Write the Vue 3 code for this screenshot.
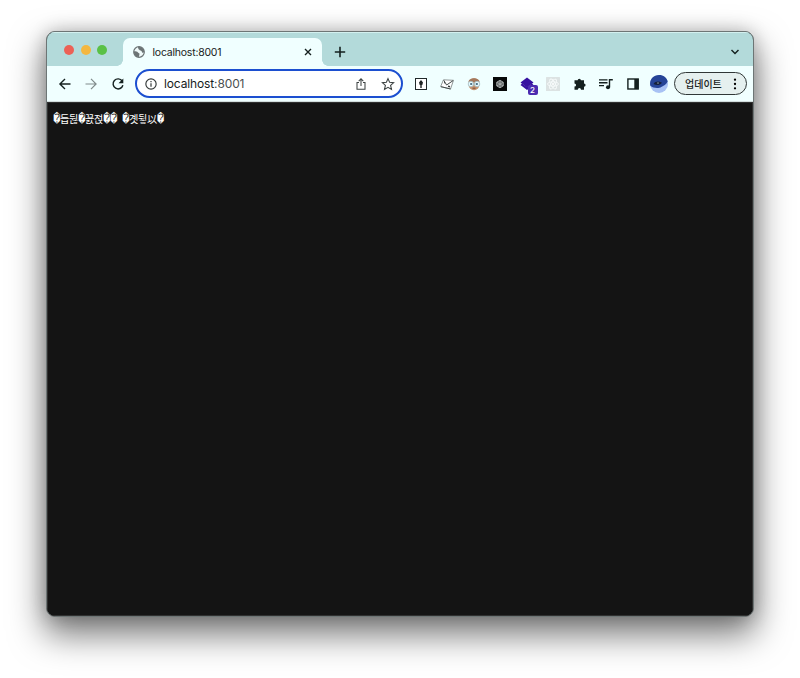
<script setup>
const body = [
  { t: '�', bad: true }, { t: '듭뒪' }, { t: '�', bad: true }, { t: '꾨젅' },
  { t: '��', bad: true }, { t: ' ', gap: true }, { t: '�', bad: true }, { t: '곗뒿以' }, { t: '�', bad: true }
]
const lights = ['#ec6156', '#f4b73f', '#5ac146']
</script>

<template>
  <main class="desktop">
    <section class="window">
      <header class="tabs">
        <div class="lights"><i v-for="c in lights" :key="c" :style="{ background: c }"></i></div>
        <div class="tab">
          <svg class="globe" width="12" height="12" viewBox="0 0 12 12"><circle cx="6" cy="6" r="5.3" fill="#f0fafa" stroke="#6c7475" stroke-width="1.2"/><path d="M1 5.3c2 0 3.2.2 4 1.2.7.8 1.6.4 1.5 1.5L5.9 11C2.7 11.2.6 8.4 1 5.3M5.2.9c-.7 1.4.4 1.2.4 2.2 0 .8 1.4.5 1.3 1.5 0 .8 1.2.2 1.9.9.7.6.2 1.4 1 1.5l1.4-.9C11.2 3.300 8.600.5 5.200.9" fill="#6c7475"/></svg>
          <span>localhost:8001</span>
          <svg class="close" width="8" height="8" viewBox="0 0 8 8"><path d="M1 1l6 6M7 1L1 7" stroke="#14201f" stroke-width="1.35"/></svg>
        </div>
        <svg class="plus" width="12" height="12" viewBox="0 0 12 12"><path d="M6 .8v10.400M.8 6h10.400" stroke="#14201f" stroke-width="1.600"/></svg>
        <svg class="chevron" width="10" height="8" viewBox="0 0 10 8"><path d="M1.500 2L5 5.600 8.500 2" fill="none" stroke="#14201f" stroke-width="1.400"/></svg>
      </header>

      <nav class="toolbar">
        <div class="history">
          <svg width="14" height="14" viewBox="0 0 14 14"><path d="M12.500 7H2M7 1.900L1.900 7 7 12.100" fill="none" stroke="#14201f" stroke-width="1.350"/></svg>
          <svg width="14" height="14" viewBox="0 0 14 14"><path d="M1.500 7H12M7 1.900L12.100 7 7 12.100" fill="none" stroke="#808b8b" stroke-width="1.200"/></svg>
          <svg width="14" height="14" viewBox="0 0 14 14"><path d="M11.200 4A5 5 0 1 0 11.900 8.300" fill="none" stroke="#14201f" stroke-width="1.450"/><path d="M12.300 1.400v4.800H7.500z" fill="#14201f"/></svg>
        </div>
        <div class="address">
          <svg width="12" height="12" viewBox="0 0 12 12"><circle cx="6" cy="6" r="5.150" fill="none" stroke="#333838" stroke-width="1.150"/><path d="M6 5.300v3.400M6 3v1.200" stroke="#333838" stroke-width="1.200"/></svg>
          <span class="url">localhost<em>:8001</em></span>
          <svg class="share" width="12" height="14" viewBox="0 0 12 14"><path d="M4 5.500H2v6.800h8V5.500H8M6 9V2M3.700 4.100L6 1.800l2.300 2.300" fill="none" stroke="#3e4444" stroke-width="1.050"/></svg>
          <svg width="14" height="14" viewBox="0 0 14 14"><path d="M7 1.600l1.600 3.700 4 .4-3 2.700.9 4L7 10.300l-3.500 2.100.9-4-3-2.700 4-.4z" fill="none" stroke="#3e4444" stroke-width="1.100"/></svg>
        </div>
        <div class="extensions">
          <svg width="14" height="14" viewBox="0 0 14 14"><rect x="1.500" y="1.500" width="11" height="11" fill="#fff" stroke="#20292a"/><path d="M7 3l2 2.500-.7 2.500H5.700L5 5.500zM6.300 8h1.400v3H6.300z" fill="#202525"/></svg>
          <svg width="14" height="14" viewBox="0 0 14 14"><path d="M3.500 2.800l10 .5L10.500 12 .6 9.600z" fill="#fff" stroke="#777e7e" stroke-width=".8"/><path d="M3.800 3.300L6.600 8l6.500-4.400M1 9.700L10.600 12" fill="none" stroke="#454d4d" stroke-width="1"/><path d="M4 5.500l.8.200M8 9.200l2 .5" stroke="#343a3a" stroke-width="1.400"/></svg>
          <svg width="14" height="14" viewBox="0 0 14 14"><ellipse cx="7" cy="7.200" rx="5.500" ry="6" fill="#c6936f"/><path d="M1.400 5.300C1.700 0 12.300 0 12.600 5.300z" fill="#a4785c"/><circle cx="3.900" cy="7" r="2.700" fill="#e6faff" stroke="#9bb8bf" stroke-width=".7"/><circle cx="10.100" cy="7" r="2.700" fill="#e6faff" stroke="#9bb8bf" stroke-width=".7"/><path d="M3.200 7h2M8.800 7h2" stroke="#244d64" stroke-width="1.500"/><path d="M5.500 11.200h3" stroke="#754d3c"/></svg>
          <svg width="14" height="14" viewBox="0 0 14 14"><rect width="14" height="14" fill="#070909"/><path d="M7 3.300l3.300 1.900v3.700L7 10.800 3.700 8.900V5.200z" fill="#5d6262" stroke="#b9bebe" stroke-width=".8"/><path d="M4 5.400l6 3.400M10 5.400L4 8.800M7 3.500v7" stroke="#c6caca" stroke-width=".6"/></svg>
          <span class="layers">
            <svg width="14" height="14" viewBox="0 0 14 14"><path d="M7 .5l6.500 5L7 10.500.5 5.500z" fill="#3610a0"/><path d="M.5 8l1.500-1.500 5 3.400 5-3.400L13.500 8 7 13z" fill="#3610a0"/></svg><b>2</b>
          </span>
          <svg width="14" height="14" viewBox="0 0 14 14"><rect width="14" height="14" rx=".5" fill="#dce3e3"/><g fill="none" stroke="#f7fbfb" stroke-width=".9"><ellipse cx="7" cy="7" rx="5.500" ry="2.200"/><ellipse cx="7" cy="7" rx="5.500" ry="2.200" transform="rotate(60 7 7)"/><ellipse cx="7" cy="7" rx="5.500" ry="2.200" transform="rotate(120 7 7)"/></g><circle cx="7" cy="7" r="1" fill="#fff"/></svg>
          <svg width="14" height="14" viewBox="0 0 14 14"><path d="M1.500 3.300h3.200a1.600 1.600 0 1 1 3.200 0H11v3.200a1.600 1.600 0 1 1 0 3.200v3H8a1.600 1.600 0 0 0-3.200 0H1.500V9.600a1.600 1.600 0 0 0 0-3.200z" fill="#14201f"/></svg>
          <svg width="14" height="14" viewBox="0 0 14 14"><path d="M0 2.800h8.500M0 5.700h8.500M0 8.600h5" stroke="#14201f" stroke-width="1.350"/><path d="M10.500 10V2.700h3.300" fill="none" stroke="#14201f" stroke-width="1.400"/><circle cx="9" cy="10.200" r="2" fill="#14201f"/></svg>
          <svg width="14" height="14" viewBox="0 0 14 14"><rect x="1.900" y="2" width="10.300" height="10" fill="#f0ffff" stroke="#14201f" stroke-width="1.400"/><path d="M8.300 2h4v10h-4z" fill="#14201f"/></svg>
        </div>
        <svg class="avatar" width="18" height="18" viewBox="0 0 18 18"><circle cx="9" cy="9" r="9" fill="#a8c2f4"/><path d="M.2 10.500C-.7 4.500 3.200 0 9 0c4.500 0 7.700 2.600 8.700 6.500-1.500 3.300-4 4.200-6.400 5.500-2.400 1.500-8 1.500-11.100-1.500z" fill="#254497"/><path d="M3.500 9c2-3.300 5.500-2.800 8.500-1.200-2 2.500-5.600 3-8.500 1.200" fill="#15213c"/><circle cx="8" cy="8.100" r=".8" fill="#8a9ba5"/></svg>
        <button class="update"><span>업데이트</span><svg width="4" height="14" viewBox="0 0 4 14"><circle cx="2" cy="2.700" r="1.150"/><circle cx="2" cy="7" r="1.150"/><circle cx="2" cy="11.300" r="1.150"/></svg></button>
      </nav>
      <article class="page"><span v-for="(part, i) in body" :key="i" :class="{ bad: part.bad, gap: part.gap }">{{ part.t }}</span></article>
    </section>
  </main>
</template>

<style>
body { margin: 0; background: #fff; }
</style>
<style scoped>
* { box-sizing: border-box; }
svg { display: block; flex: none; }
.desktop { width: 800px; height: 678px; padding: 31px 46px 61px; overflow: hidden; background: #fff; font-family: Inter, "Noto Sans CJK KR", sans-serif; color: #182221; }
.window { width: 708px; height: 586px; display: flex; flex-direction: column; border: 1px solid #6d7575; border-radius: 9px; overflow: hidden; background: #141414; box-shadow: 0 16px 34px 2px rgba(0,0,0,.52), 0 0 18px rgba(0,0,0,.2); }
.tabs { height: 34px; flex: none; display: flex; align-items: center; padding: 6px 13px 0 17px; background: #b3dada; box-shadow: inset 0 1px #d3f0ef; }
.lights { display: flex; gap: 6.500px; width: 59px; margin-top: -5px; }
.lights i { width: 10px; height: 10px; border-radius: 50%; }
.tab { position: relative; width: 199px; height: 28px; display: flex; align-items: center; padding: 0 10px; background: #f0ffff; border-radius: 7px 7px 0 0; font-size: 10.500px; letter-spacing: -.22px; }
.tab::before, .tab::after { content: ""; position: absolute; bottom: 0; width: 6px; height: 6px; }
.tab::before { left: -6px; background: radial-gradient(circle at 0 0, transparent 5.500px, #f0ffff 6px); }
.tab::after { right: -6px; background: radial-gradient(circle at 100% 0, transparent 5.500px, #f0ffff 6px); }
.tab span { margin-left: 7.500px; }
.close { margin-left: auto; }
.plus { margin-left: 12px; }
.chevron { margin-left: auto; }
.toolbar { height: 36px; flex: none; display: flex; align-items: center; padding: 0 6px 0 10.500px; background: #f0ffff; border-bottom: 1px solid #d2dddd; }
.history { display: flex; gap: 12.500px; width: 77.500px; }
.address { width: 268px; height: 29px; display: flex; align-items: center; padding: 0 6.500px 0 8px; border: 2px solid #1c4fd0; border-radius: 15px; background: #fff; }
.url { margin-left: 7px; margin-right: auto; font-size: 12px; letter-spacing: -.13px; color: #181c1c; }
.url em { font-style: normal; color: #4a5050; }
.share { margin-right: 14px; }
.extensions { display: flex; gap: 12.500px; margin-left: 10.500px; }
.layers { position: relative; width: 14px; height: 14px; }
.layers b { position: absolute; left: 8px; top: 8px; width: 10px; height: 10px; border-radius: 2px; background: #4b2bb0; color: #fff; font-size: 8px; line-height: 10px; font-weight: 500; text-align: center; }
.avatar { margin-left: 10.500px; }
.update { width: 73px; height: 23px; margin-left: auto; padding: 0 9px 0 10px; display: flex; align-items: center; justify-content: space-between; border: 1.200px solid #303737; border-radius: 12px; background: #e5f0ef; color: #182221; font: 500 10px "Noto Sans CJK KR", sans-serif; white-space: nowrap; }
.update span { letter-spacing: 0; }
.page { flex: 1; display: flex; align-items: flex-start; padding: 9px 6px; color: #fff; font: 400 10.200px/15px "Noto Sans CJK KR", sans-serif; letter-spacing: -.45px; white-space: pre; box-shadow: inset 0 0 0 1px #303030; }
.page span { opacity: .99; }
.page .bad { font-family: "DejaVu Sans Mono", monospace; font-size: 12.500px; }
.page .gap { width: 5px; }
</style>
